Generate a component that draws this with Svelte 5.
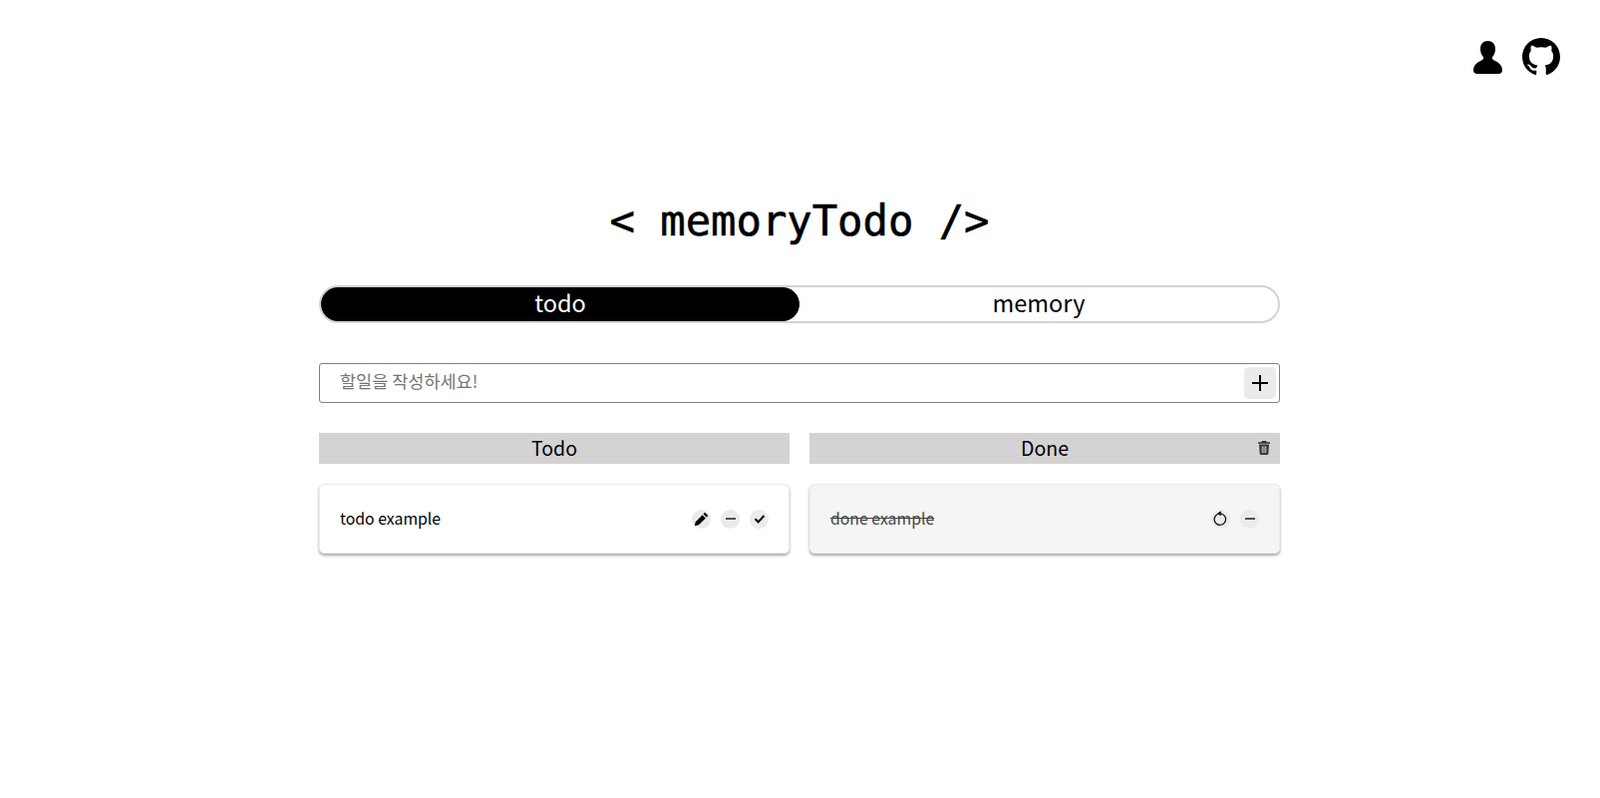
<script>
  let tab = $state('todo');
  let draft = $state('');

  const todos = ['todo example'];
  const dones = ['done example'];
</script>

<div class="page">
  <nav class="top-nav">
    <a href="#user" class="nav-icon user" aria-label="user">
      <svg viewBox="0 0 29 33" width="29" height="33">
        <path d="M14.500 0C10 0 7 3.200 7 8c0 3.500 1.200 6 2.500 7.500 1 1.300.8 2.800-.5 3.500C6 20.700 0 23 0 29.500 0 31.500 1.500 33 3.500 33h22c2 0 3.500-1.500 3.500-3.500C29 23 23 20.700 20 19c-1.300-.7-1.500-2.200-.5-3.500C20.800 14 22 11.500 22 8c0-4.800-3-8-7.500-8z" />
      </svg>
    </a>
    <a href="#github" class="nav-icon" aria-label="github">
      <svg viewBox="0 0 16 16" width="38" height="38">
        <path d="M8 0C3.580 0 0 3.580 0 8c0 3.540 2.290 6.530 5.470 7.590.4.070.55-.17.55-.38 0-.19-.01-.82-.01-1.490-2.010.37-2.530-.49-2.690-.94-.09-.23-.48-.94-.82-1.130-.28-.15-.68-.52-.01-.53.63-.01 1.080.58 1.230.82.72 1.210 1.870.87 2.330.66.070-.52.28-.87.51-1.070-1.780-.2-3.640-.89-3.640-3.950 0-.87.31-1.590.82-2.150-.08-.2-.36-1.020.08-2.120 0 0 .67-.21 2.200.82.64-.18 1.320-.27 2-.27s1.360.09 2 .27c1.530-1.040 2.200-.82 2.200-.82.44 1.100.16 1.920.08 2.120.51.56.82 1.270.82 2.150 0 3.070-1.870 3.750-3.650 3.950.29.25.54.73.54 1.480 0 1.070-.01 1.930-.01 2.200 0 .21.15.46.55.38A8.013 8.013 0 0 0 16 8c0-4.420-3.580-8-8-8z" />
      </svg>
    </a>
  </nav>

  <main class="container">
    <h1 class="title">&lt; memoryTodo /&gt;</h1>

    <div class="tabs">
      <button class="tab" class:active={tab === 'todo'} onclick={() => (tab = 'todo')}>todo</button>
      <button class="tab" class:active={tab === 'memory'} onclick={() => (tab = 'memory')}>memory</button>
    </div>

    <form class="add-form" onsubmit={(e) => e.preventDefault()}>
      <input type="text" placeholder="할일을 작성하세요!" bind:value={draft} />
      <button class="add-btn" aria-label="add">
        <svg viewBox="0 0 20 20" width="20" height="20">
          <path d="M10 2v16M2 10h16" stroke="#000" stroke-width="2" fill="none" />
        </svg>
      </button>
    </form>

    <div class="columns">
      <section>
        <h2 class="col-head">Todo</h2>
        {#each todos as item}
          <div class="card">
            <span class="text">{item}</span>
            <div class="actions">
              <button class="circle" aria-label="edit">
                <svg viewBox="0 0 16 16" width="15" height="15">
                  <path d="M11.800 .8l3.400 3.400-1.700 1.700-3.400-3.400zM9.200 3.400l3.400 3.400-7.400 7.400-4.400 1 1-4.400z" />
                </svg>
              </button>
              <button class="circle" aria-label="remove">
                <svg viewBox="0 0 12 12" width="12" height="12"><path d="M1 6h10" stroke="#000" stroke-width="1.300" /></svg>
              </button>
              <button class="circle" aria-label="done">
                <svg viewBox="0 0 12 12" width="12" height="12"><path d="M1.500 6.200L4.600 9.300 10.500 3" stroke="#000" stroke-width="2" fill="none" /></svg>
              </button>
            </div>
          </div>
        {/each}
      </section>

      <section>
        <h2 class="col-head">
          Done
          <button class="trash" aria-label="clear">
            <svg viewBox="0 0 14 14" width="14" height="14" fill="#333">
              <path d="M5 0h4l.6 1.200H13v1.600H1V1.200h3.400zM2 3.600h10l-.7 9.200c-.1.7-.5 1.200-1.200 1.200H3.900c-.7 0-1.100-.5-1.200-1.200zM4.700 5.200v7h1v-7zm1.800 0v7h1v-7zm1.800 0v7h1v-7z" fill-rule="evenodd" />
            </svg>
          </button>
        </h2>
        {#each dones as item}
          <div class="card finished">
            <span class="text">{item}</span>
            <div class="actions">
              <button class="circle" aria-label="restore">
                <svg viewBox="0 0 16 16" width="16" height="16">
                  <path d="M4.700 3.300A5.700 5.700 0 1 0 8 3" stroke="#000" stroke-width="1.200" fill="none" />
                  <path d="M7.800 .2v5L4 2.700z" />
                </svg>
              </button>
              <button class="circle" aria-label="remove">
                <svg viewBox="0 0 12 12" width="12" height="12"><path d="M1 6h10" stroke="#000" stroke-width="1.300" /></svg>
              </button>
            </div>
          </div>
        {/each}
      </section>
    </div>
  </main>
</div>

<style>
  :global(body) {
    margin: 0;
    background: #fff;
    color: #000;
    font-family: "Noto Sans CJK KR", "Noto Sans", sans-serif;
  }

  .page {
    width: 1604px;
    height: 800px;
    overflow: hidden;
  }

  /* top right links */
  .top-nav {
    display: flex;
    justify-content: flex-end;
    align-items: center;
    gap: 20px;
    height: 38px;
    padding: 38px 39px 0 0;
  }

  .nav-icon {
    display: block;
    height: 38px;
    color: #000;
  }

  .nav-icon.user {
    height: 33px;
  }

  .container {
    width: 964px;
    margin: 0 auto;
    padding-top: 120px;
  }

  .title {
    margin: 0 0 38px;
    height: 52px;
    line-height: 52px;
    text-align: center;
    font-family: "DejaVu Sans Mono", monospace;
    font-size: 42.2px;
    font-weight: 400;
    -webkit-text-stroke: 0.6px #000;
  }

  /* todo / memory switch */
  .tabs {
    display: flex;
    box-sizing: border-box;
    height: 38px;
    border: 2px solid #d3d3d3;
    border-radius: 19px;
    margin-bottom: 40px;
  }

  .tab {
    flex: 1;
    border: none;
    background: none;
    border-radius: 17px;
    padding: 0 0 3px;
    font: inherit;
    font-size: 23.5px;
    line-height: 31px;
    color: #000;
  }

  .tab.active {
    background: #000;
    color: #fff;
  }

  .add-form {
    display: flex;
    align-items: center;
    box-sizing: border-box;
    height: 40px;
    border: 1px solid #808080;
    border-radius: 3px;
    padding: 0 3px 0 20px;
    margin-bottom: 30px;
  }

  .add-form input {
    flex: 1;
    border: none;
    outline: none;
    padding: 0 0 5px;
    font: inherit;
    font-size: 17.5px;
    background: none;
  }

  .add-form input::placeholder {
    color: #757575;
  }

  .add-btn {
    display: flex;
    align-items: center;
    justify-content: center;
    width: 32px;
    height: 32px;
    padding: 0;
    border: none;
    border-radius: 5px;
    background: #ebebeb;
  }

  .columns {
    display: grid;
    grid-template-columns: 1fr 1fr;
    gap: 20px;
  }

  .col-head {
    position: relative;
    margin: 0 0 20px;
    height: 31px;
    line-height: 29px;
    background: #d3d3d3;
    text-align: center;
    font-size: 19.5px;
    font-weight: 400;
  }

  .trash {
    position: absolute;
    right: 9px;
    top: 8px;
    display: flex;
    padding: 0;
    border: none;
    background: none;
  }

  .card {
    display: flex;
    align-items: center;
    justify-content: space-between;
    box-sizing: border-box;
    height: 70px;
    padding: 0 20px;
    background: #fff;
    border: 1px solid #ebebeb;
    border-radius: 5px;
    box-shadow: 0 2px 3px rgba(0, 0, 0, 0.35);
  }

  .card .text {
    font-size: 15.8px;
    position: relative;
    top: -1px;
  }

  .card.finished {
    background: #f5f5f5;
  }

  .card.finished .text {
    color: #444;
    text-decoration: line-through;
  }

  .actions {
    display: flex;
    gap: 10px;
  }

  .circle {
    display: flex;
    align-items: center;
    justify-content: center;
    width: 19px;
    height: 19px;
    padding: 0;
    border: none;
    border-radius: 50%;
    background: #ebebeb;
  }
</style>
